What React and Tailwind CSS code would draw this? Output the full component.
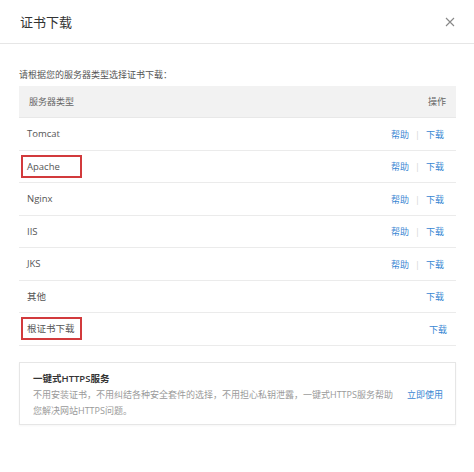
import React from "react";

const rows = [
  { name: "Tomcat", help: true },
  { name: "Apache", help: true, mark: true },
  { name: "Nginx", help: true },
  { name: "IIS", help: true },
  { name: "JKS", help: true },
  { name: "其他", help: false },
  { name: "根证书下载", help: false, mark: true, root: true },
];

export default function App() {
  return (
    <div
      className="w-[474px] h-[472px] bg-white overflow-hidden relative"
      style={{ fontFamily: '"Open Sans", "Noto Sans CJK SC", sans-serif' }}
    >
      <div className="h-[44px] pl-5 pr-[19px] flex items-center justify-between border-b border-[#e6e6e6]">
        <span className="text-[13px] text-[#333] leading-none mt-[1px]">证书下载</span>
        <svg width="10" height="10" viewBox="0 0 10 10">
          <path d="M1 1L9 9M9 1L1 9" stroke="#888" strokeWidth="1.1" />
        </svg>
      </div>
      <div className="px-[19px]">
        <div className="pt-[25px] text-[9px] leading-[12px] text-[#555]">请根据您的服务器类型选择证书下载：</div>
        <div className="mt-[5px] w-[437px]">
          <div className="h-[32px] bg-[#f2f2f2] flex items-center justify-between pl-[10px] pr-[10px] text-[9px] text-[#666] border-b border-[#e8e8e8]">
            <span>服务器类型</span>
            <span>操作</span>
          </div>
          {rows.map((r) => (
            <div
              key={r.name}
              className="relative h-[32.5px] flex items-center justify-between pl-[8px] pr-[12px] text-[9.5px] text-[#555] border-b border-[#ebebeb]"
            >
              <span className="mt-[1px]">{r.name}</span>
              <span className="flex items-center text-[9px] text-[#3a87d3] mt-[1px]">
                {r.help && (
                  <>
                    <span>帮助</span>
                    <span className="mx-[6px] text-[#d5d5d5]">|</span>
                  </>
                )}
                <span className={r.root ? "mr-[-3px]" : ""}>下载</span>
              </span>
              {r.mark && (
                <div className="absolute left-[2px] top-[4px] w-[61px] h-[23px] border-2 border-[#d23a3c]" />
              )}
            </div>
          ))}
        </div>
        <div className="mt-[16px] w-[437px] border border-[#e6e6e6] pl-[13px] pr-[12px] pt-[8px] pb-[5px] shadow-[0_1px_2px_rgba(0,0,0,0.04)]">
          <div className="text-[9.5px] leading-[16px] font-semibold text-[#333]">一键式HTTPS服务</div>
          <div className="flex items-start">
            <div className="flex-1 text-[9px] leading-[16px] text-[#9a9a9a]">
              不用安装证书，不用纠结各种安全套件的选择，不用担心私钥泄露，一键式HTTPS服务帮助您解决网站HTTPS问题。
            </div>
            <span className="ml-[8px] shrink-0 text-[9px] leading-[16px] text-[#3a87d3]">立即使用</span>
          </div>
        </div>
      </div>
    </div>
  );
}
